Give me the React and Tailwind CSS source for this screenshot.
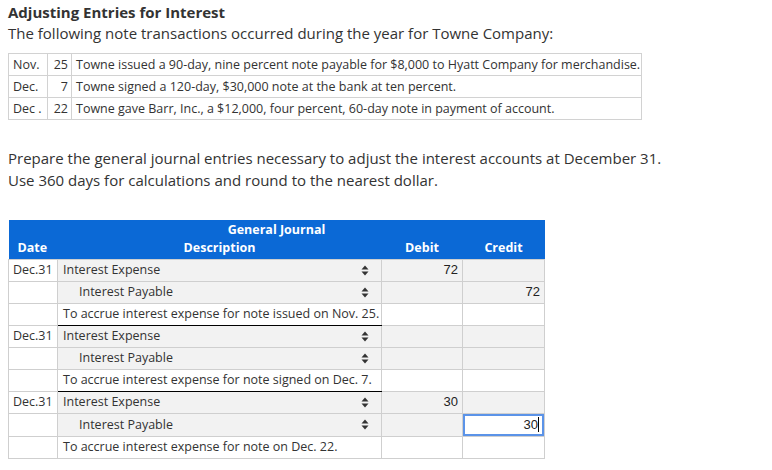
import React from 'react';

const transactions = [
  { month: 'Nov.', day: '25', text: 'Towne issued a 90-day, nine percent note payable for $8,000 to Hyatt Company for merchandise.' },
  { month: 'Dec.', day: '7', text: 'Towne signed a 120-day, $30,000 note at the bank at ten percent.' },
  { month: 'Dec .', day: '22', text: 'Towne gave Barr, Inc., a $12,000, four percent, 60-day note in payment of account.' },
];

const entries = [
  { debit: '72', credit: '72', memo: 'To accrue interest expense for note issued on Nov. 25.' },
  { debit: '', credit: '', memo: 'To accrue interest expense for note signed on Dec. 7.' },
  { debit: '30', credit: '30', memo: 'To accrue interest expense for note on Dec. 22.', focused: true },
];

function UpDown() {
  return (
    <svg width="8" height="11" viewBox="0 0 8 11" className="shrink-0">
      <path d="M4 0.5 L7.5 4.5 H0.5 Z" fill="#333" />
      <path d="M4 10.5 L7.5 6.5 H0.5 Z" fill="#333" />
    </svg>
  );
}

function AccountCell({ label, indent }) {
  return (
    <td className="border border-[#cfcfcf] bg-[#f2f2f2] p-0 h-[22px]">
      <div className={`flex items-center justify-between pr-[12px] ${indent ? 'pl-[21px]' : 'pl-[5px]'}`}>
        <span>{label}</span>
        <UpDown />
      </div>
    </td>
  );
}

function NumCell({ value, gray, focused }) {
  if (focused) {
    return (
      <td className="border border-[#cfcfcf] bg-[#f2f2f2] p-0 h-[22px]">
        <div className="h-[22px] border-2 border-[#5b93e8] bg-white flex items-center justify-end pr-[3px] font-['Liberation_Sans',Arial,sans-serif] text-[13px] text-[#222]">
          {value}
          <span className="inline-block w-px h-[15px] bg-black" />
        </div>
      </td>
    );
  }
  return (
    <td className={`border border-[#cfcfcf] p-0 h-[22px] text-right pr-[4px] font-['Liberation_Sans',Arial,sans-serif] text-[13px] text-[#222] ${gray ? 'bg-[#f2f2f2]' : 'bg-white'}`}>
      {value}
    </td>
  );
}

export default function App() {
  return (
    <div className="w-[772px] h-[470px] bg-white font-['Open_Sans','Noto_Sans',sans-serif] text-[#333] pl-[8px] pt-[2px]">
      <h1 className="text-[15px] font-bold leading-[20px]">Adjusting Entries for Interest</h1>
      <p className="text-[15px] leading-[22px]">The following note transactions occurred during the year for Towne Company:</p>

      {/* Transaktionen */}
      <table className="mt-[9px] border-collapse text-[12.5px] leading-[20px] w-[634px]">
        <tbody>
          {transactions.map((t) => (
            <tr key={t.month + t.day} className="h-[22px]">
              <td className="border border-[#d2d2d2] w-[39px] pl-[4px]">{t.month}</td>
              <td className="border border-[#d2d2d2] w-[24px] text-right pr-[3px]">{t.day}</td>
              <td className="border border-[#d2d2d2] pl-[4px]">{t.text}</td>
            </tr>
          ))}
        </tbody>
      </table>

      <p className="mt-[27px] text-[15px] leading-[22px]">
        Prepare the general journal entries necessary to adjust the interest accounts at December 31.
        <br />
        Use 360 days for calculations and round to the nearest dollar.
      </p>

      {/* General Journal */}
      <table className="mt-[29px] border-collapse text-[12.5px] leading-[16px] w-[536px] table-fixed">
        <colgroup>
          <col className="w-[49px]" />
          <col className="w-[324px]" />
          <col className="w-[81px]" />
          <col className="w-[82px]" />
        </colgroup>
        <thead>
          <tr className="bg-[#0b69d6] text-white font-bold">
            <th colSpan={4} className="h-[18px] pt-[1px] text-center align-bottom">General Journal</th>
          </tr>
          <tr className="bg-[#0b69d6] text-white font-bold">
            <th className="h-[21px] pt-[2px] text-left pl-[9px] align-top">Date</th>
            <th className="h-[21px] pt-[2px] text-center align-top">Description</th>
            <th className="h-[21px] pt-[2px] text-center align-top">Debit</th>
            <th className="h-[21px] pt-[2px] text-center align-top">Credit</th>
          </tr>
        </thead>
        <tbody>
          {entries.map((e, i) => (
            <React.Fragment key={i}>
              <tr>
                <td className="border border-[#cfcfcf] bg-white h-[22px] pl-[4px]">Dec.31</td>
                <AccountCell label="Interest Expense" />
                <NumCell value={e.debit} gray />
                <NumCell value="" gray />
              </tr>
              <tr>
                <td className="border border-[#cfcfcf] bg-white h-[22px]" />
                <AccountCell label="Interest Payable" indent />
                <NumCell value="" gray />
                <NumCell value={e.credit} gray focused={e.focused} />
              </tr>
              <tr>
                <td className="border border-[#cfcfcf] bg-white h-[22px]" />
                <td className={`border border-[#cfcfcf] bg-white h-[22px] pl-[5px] ${i < 2 ? 'border-b-[1.5px] border-b-black' : ''}`}>{e.memo}</td>
                <NumCell value="" />
                <NumCell value="" />
              </tr>
            </React.Fragment>
          ))}
        </tbody>
      </table>
    </div>
  );
}
